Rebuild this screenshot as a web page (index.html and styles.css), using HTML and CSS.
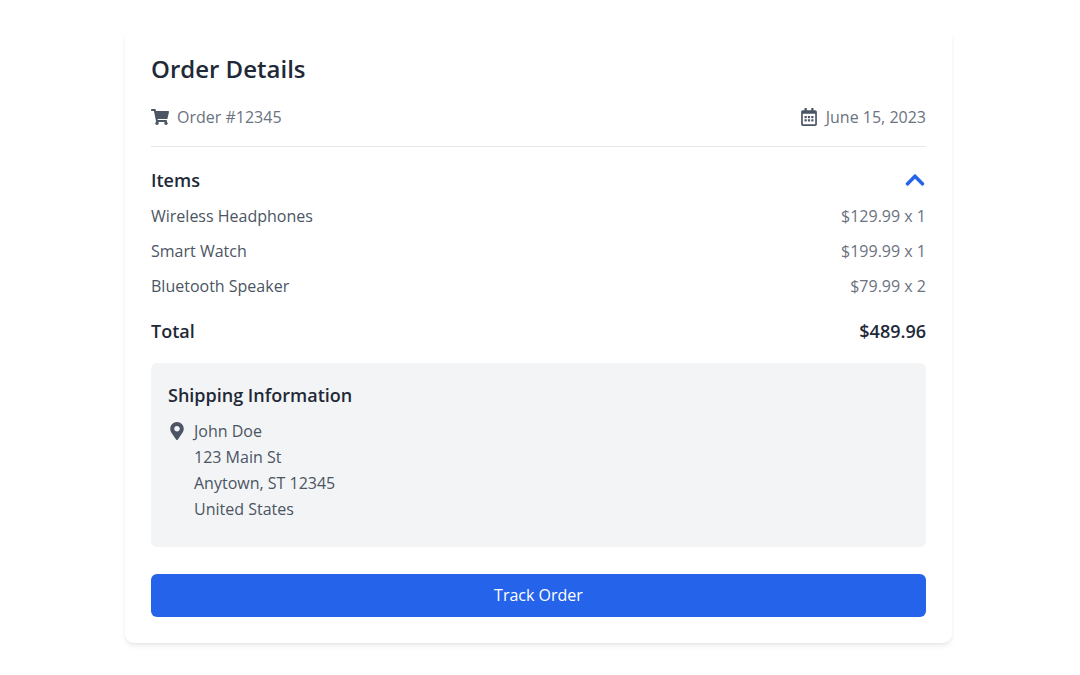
FILE: index.html
```html
<!DOCTYPE html>
<html lang="en">
<head>
  <meta charset="UTF-8">
  <meta name="viewport" content="width=device-width, initial-scale=1.0">
  <title>Order Details</title>
  <link rel="stylesheet" href="styles.css">
</head>
<body>
  <main class="order-card">
    <h1>Order Details</h1>

    <div class="row order-meta">
      <div class="meta">
        <svg class="icon icon-cart" viewBox="0 0 576 512" aria-hidden="true"><path d="M528.12 301.319l47.273-208C578.806 78.301 567.391 64 551.99 64H159.208l-9.166-44.81C147.758 8.021 137.93 0 126.529 0H24C10.745 0 0 10.745 0 24v16c0 13.255 10.745 24 24 24h69.883l70.248 343.435C147.325 417.1 136 435.222 136 456c0 30.928 25.072 56 56 56s56-25.072 56-56c0-15.674-6.447-29.835-16.824-40h209.647C430.447 426.165 424 440.326 424 456c0 30.928 25.072 56 56 56s56-25.072 56-56c0-22.172-12.888-41.332-31.579-50.405l5.517-24.276c3.413-15.018-8.002-29.319-23.403-29.319H218.117l-6.545-32h293.145c11.206 0 20.92-7.754 23.403-18.681z"/></svg>
        <span class="muted">Order #12345</span>
      </div>
      <div class="meta">
        <svg class="icon" viewBox="0 0 448 512" aria-hidden="true"><path d="M148 288h-40c-6.600 0-12-5.400-12-12v-40c0-6.600 5.400-12 12-12h40c6.600 0 12 5.400 12 12v40c0 6.600-5.400 12-12 12zm108-12v-40c0-6.600-5.400-12-12-12h-40c-6.600 0-12 5.400-12 12v40c0 6.600 5.400 12 12 12h40c6.600 0 12-5.400 12-12zm96 0v-40c0-6.600-5.400-12-12-12h-40c-6.600 0-12 5.400-12 12v40c0 6.600 5.400 12 12 12h40c6.600 0 12-5.400 12-12zm-96 96v-40c0-6.600-5.400-12-12-12h-40c-6.600 0-12 5.400-12 12v40c0 6.600 5.400 12 12 12h40c6.600 0 12-5.400 12-12zm-96 0v-40c0-6.600-5.400-12-12-12h-40c-6.600 0-12 5.400-12 12v40c0 6.600 5.400 12 12 12h40c6.600 0 12-5.400 12-12zm192 0v-40c0-6.600-5.400-12-12-12h-40c-6.600 0-12 5.400-12 12v40c0 6.600 5.400 12 12 12h40c6.600 0 12-5.400 12-12zm96-260v352c0 26.500-21.500 48-48 48H48c-26.500 0-48-21.500-48-48V112c0-26.500 21.500-48 48-48h48V12c0-6.600 5.400-12 12-12h40c6.600 0 12 5.400 12 12v52h128V12c0-6.600 5.400-12 12-12h40c6.600 0 12 5.400 12 12v52h48c26.500 0 48 21.500 48 48zm-48 346V160H48v298c0 3.300 2.700 6 6 6h340c3.300 0 6-2.700 6-6z"/></svg>
        <span class="muted">June 15, 2023</span>
      </div>
    </div>

    <section class="items">
      <div class="row">
        <h2>Items</h2>
        <button class="toggle" type="button" aria-label="Hide items" aria-expanded="true" aria-controls="item-list">
          <svg viewBox="0 0 448 512" aria-hidden="true"><path d="M240.971 130.524l194.343 194.343c9.373 9.373 9.373 24.569 0 33.941l-22.667 22.667c-9.357 9.357-24.522 9.375-33.901.04L224 227.495 69.255 381.516c-9.379 9.335-24.544 9.317-33.901-.04l-22.667-22.667c-9.373-9.373-9.373-24.569 0-33.941L207.030 130.525c9.372-9.373 24.568-9.373 33.941-.001z"/></svg>
        </button>
      </div>
      <ul id="item-list" class="item-list">
        <li class="row"><span>Wireless Headphones</span><span class="muted">$129.99 x 1</span></li>
        <li class="row"><span>Smart Watch</span><span class="muted">$199.99 x 1</span></li>
        <li class="row"><span>Bluetooth Speaker</span><span class="muted">$79.99 x 2</span></li>
      </ul>
    </section>

    <div class="row total">
      <span>Total</span>
      <span>$489.96</span>
    </div>

    <section class="shipping">
      <h2>Shipping Information</h2>
      <div class="shipping-body">
        <svg class="icon" viewBox="0 0 384 512" aria-hidden="true"><path d="M172.268 501.670C26.970 291.031 0 269.413 0 192 0 85.961 85.961 0 192 0s192 85.961 192 192c0 77.413-26.970 99.031-172.268 309.670-9.535 13.774-29.930 13.773-39.464 0zM192 272c44.183 0 80-35.817 80-80s-35.817-80-80-80-80 35.817-80 80 35.817 80 80 80z"/></svg>
        <address>
          John Doe<br>
          123 Main St<br>
          Anytown, ST 12345<br>
          United States
        </address>
      </div>
    </section>

    <button class="track-button" type="button">Track Order</button>
  </main>
</body>
</html>
```
FILE: styles.css
```css
* {
  box-sizing: border-box;
}
body {
  margin: 0;
  padding: 28px 3px 28px 0;
  background: #fff;
  color: #4b5563;
  font-family: 'Segoe UI', 'Open Sans', 'Noto Sans', sans-serif;
  font-size: 16px;
  line-height: 26px;
}
h1, h2 {
  margin: 0;
  color: #1f2937;
  font-weight: 600;
}
h1 {
  margin-bottom: 20px;
  font-size: 24px;
  line-height: 30px;
}
h2 {
  font-size: 18px;
  line-height: 30px;
}
.order-card {
  max-width: 827px;
  margin: 0 auto;
  padding: 26px;
  background: #fff;
  border-radius: 9px;
  box-shadow: 0 4px 6px -1px rgba(0, 0, 0, 0.06), 0 2px 4px -2px rgba(0, 0, 0, 0.1);
}
.row {
  display: flex;
  justify-content: space-between;
  align-items: center;
}
.muted {
  color: #6b7280;
}
.icon {
  width: 18px;
  height: 18px;
  flex-shrink: 0;
  fill: #4b5563;
}
.meta {
  display: flex;
  align-items: center;
  gap: 8px;
}
.order-meta {
  padding-bottom: 16px;
  border-bottom: 1px solid #e5e7eb;
  margin-bottom: 18px;
}
.items {
  margin-bottom: 17px;
}
.toggle {
  display: flex;
  padding: 0;
  border: 0;
  background: none;
  cursor: pointer;
}
.toggle svg {
  width: 22px;
  height: 22px;
  fill: #2563eb;
}
.item-list {
  display: grid;
  gap: 9px;
  margin: 8px 0 0;
  padding: 0;
  list-style: none;
}
.total {
  margin-bottom: 17px;
  color: #1f2937;
  font-size: 18px;
  font-weight: 600;
  line-height: 30px;
}
.shipping {
  padding: 17px 17px 25px;
  margin-bottom: 27px;
  background: #f3f4f6;
  border-radius: 6px;
}
.shipping-body {
  display: flex;
  gap: 8px;
  margin-top: 8px;
}
.shipping-body .icon {
  margin-top: 4px;
}
address {
  font-style: normal;
}
.track-button {
  display: block;
  width: 100%;
  padding: 8px 17px 9px;
  border: 0;
  border-radius: 6px;
  background: #2563eb;
  color: #fff;
  font: inherit;
  cursor: pointer;
}
.track-button:hover {
  background: #1d4ed8;
}
```
